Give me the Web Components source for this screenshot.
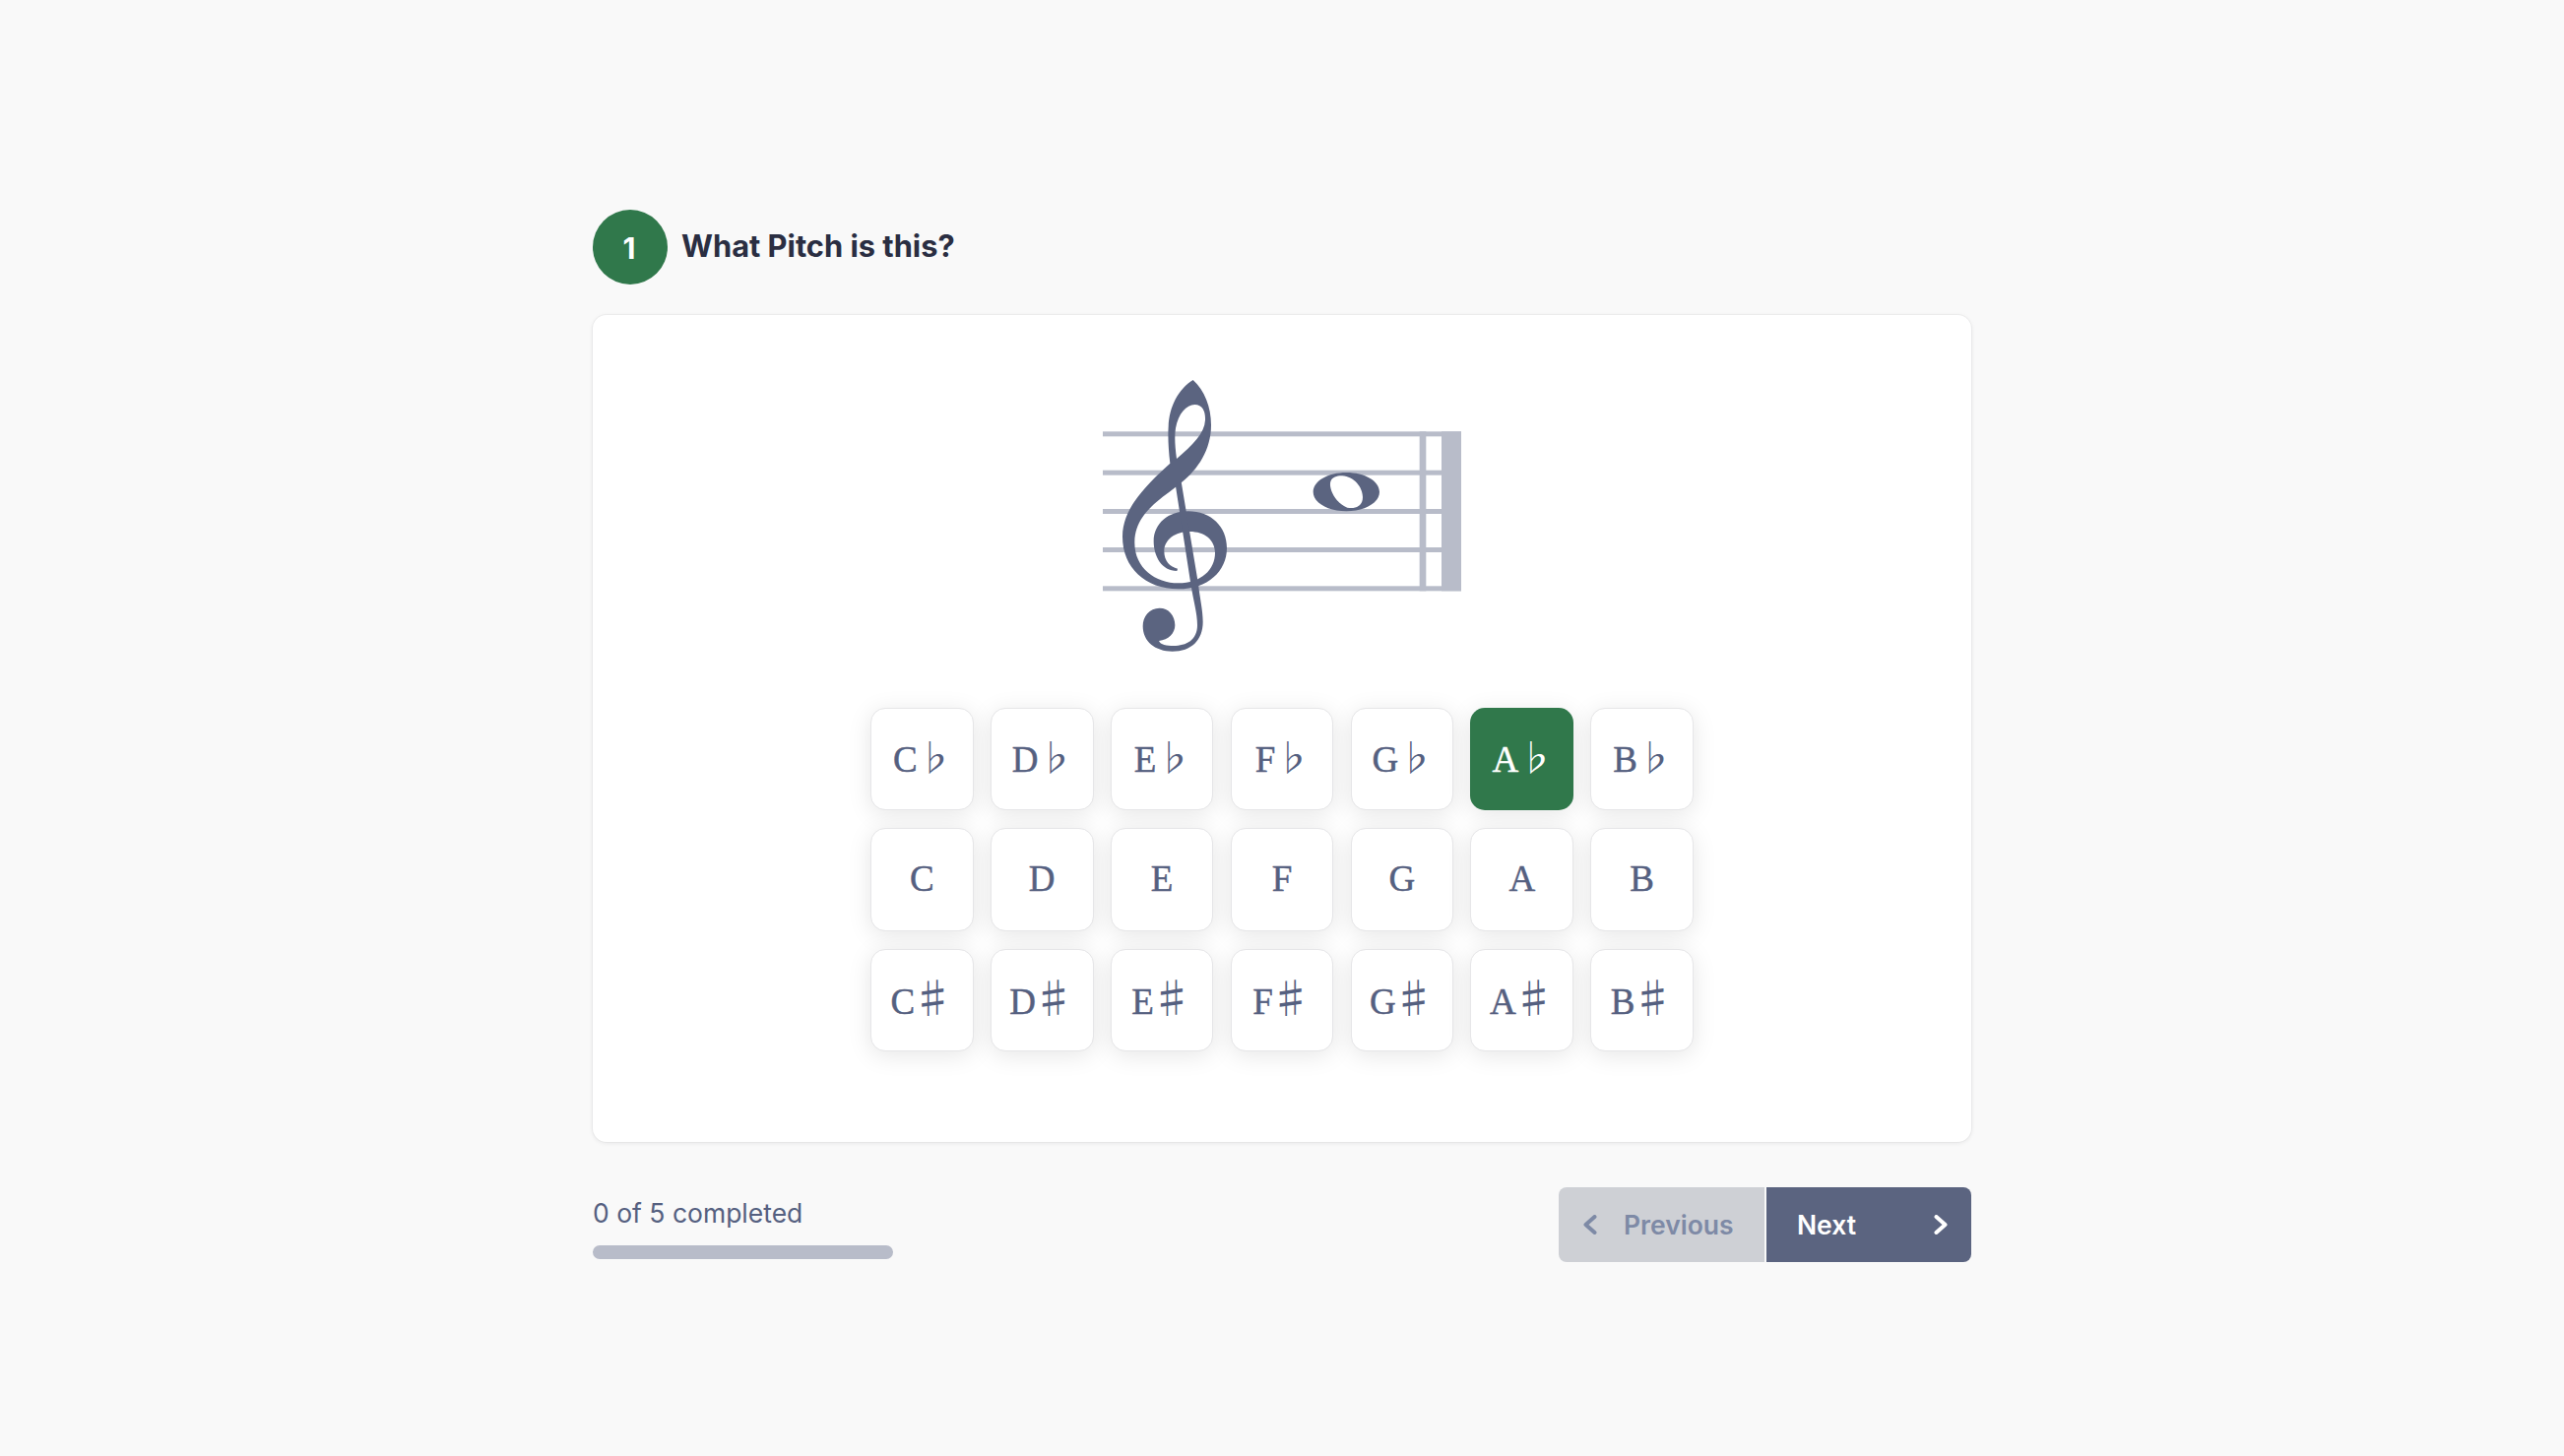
<!DOCTYPE html>
<html lang="en"><head><meta charset="utf-8"><title>What Pitch is this?</title>
<style>
html,body{margin:0;padding:0;background:#f9f9f9;}
body{font-family:Inter,"Liberation Sans",sans-serif;}
</style></head>
<body>
<quiz-page>
  <step-heading number="1">What Pitch is this?</step-heading>
  <question-card>
    <staff-figure></staff-figure>
    <note-grid selected="Ab"></note-grid>
  </question-card>
  <quiz-footer>
    <quiz-progress slot="left">0 of 5 completed</quiz-progress>
    <nav-button slot="right" kind="prev">Previous</nav-button>
    <nav-button slot="right" kind="next">Next</nav-button>
  </quiz-footer>
</quiz-page>
<script>
function def(name, css, html){
  customElements.define(name, class extends HTMLElement{
    constructor(){super();this.attachShadow({mode:'open'});}
    connectedCallback(){
      this.shadowRoot.innerHTML='<style>'+css+'</style>'+(typeof html==='function'?html(this):html);
    }
  });
}
def('quiz-page',
 ':host{display:block;width:1400px;margin:0 auto;padding-top:213px;box-sizing:content-box;}',
 '<slot></slot>');
def('step-heading',
 `:host{display:flex;align-items:center;gap:14px;height:76px;margin-bottom:31px;color:#2a2e42;font:700 30.8px/1 Inter,sans-serif;}
  .n{flex:none;width:76px;height:76px;border-radius:50%;background:#30784b;color:#fff;display:flex;align-items:center;justify-content:center;font:700 30px/1 Inter,sans-serif;padding-top:2px;padding-right:2px;box-sizing:border-box;}
  .t{position:relative;top:-1px;}`,
 h=>`<span class="n">${h.getAttribute('number')}</span><span class="t"><slot></slot></span>`);
def('question-card',
 `:host{display:flex;flex-direction:column;align-items:center;box-sizing:border-box;height:840px;padding-top:66px;background:#fff;border-radius:14px;box-shadow:0 0 0 1px rgba(20,20,40,.03),0 1px 5px rgba(20,20,40,.085);}`,
 '<slot></slot>');
def('staff-figure',
 `:host{display:block;width:364px;height:276px;margin-bottom:57px;flex:none;}
  svg{display:block;width:100%;height:100%;}`,
 `<svg viewBox="120 78 1092 828" aria-label="Treble clef with a whole note">
   <g fill="#b8bcc9">
     <rect x="120" y="235" width="1092" height="15"/><rect x="120" y="353" width="1092" height="15"/>
     <rect x="120" y="471" width="1092" height="15"/><rect x="120" y="588" width="1092" height="15"/>
     <rect x="120" y="706" width="1092" height="15"/>
     <rect x="1085" y="235" width="20" height="486"/><rect x="1152" y="235" width="60" height="486"/>
   </g>
   <g fill="#5b6480">
     <path fill-rule="evenodd" d="M395 78C430 110 450 160 450 215C450 290 410 350 360 390C300 440 220 480 217 570C215 650 280 697 350 697C420 697 462 655 462 605C462 565 430 540 385 540C340 540 307 565 307 600C307 630 325 648 348 653L346 660C300 660 275 615 275 570C275 515 320 478 380 478C450 478 498 525 498 590C498 660 440 715 350 715C250 715 180 650 180 555C180 470 250 400 325 332C320 290 318 250 320 220C322 160 350 105 395 78ZM345 318C340 280 338 250 342 225C350 180 375 153 400 153C425 153 433 175 432 200C430 240 395 275 345 318Z"/>
     <path d="M341 395L388 700C396 750 408 790 408 825C408 870 375 888 335 888C315 888 295 885 291 873C320 870 340 850 340 825C340 795 320 773 293 773C262 773 242 798 242 828C242 875 280 905 332 905C390 905 425 870 425 815C425 780 416 745 411 700L359 388Z"/>
     <path fill-rule="evenodd" d="M761 419C761 386 806 360 862 360C918 360 963 386 963 419C963 452 918 478 862 478C806 478 761 452 761 419ZM815 385C805 405 830 455 865 467C890 472 912 462 912 435C912 405 885 372 850 370C835 369 820 374 815 385Z"/>
   </g>
 </svg>`);
const LETTERS=['C','D','E','F','G','A','B'];
def('note-grid',
 `:host{display:grid;grid-template-columns:repeat(7,104.6px);grid-auto-rows:104.4px;column-gap:17.3px;row-gap:18px;}`,
 h=>{const sel=h.getAttribute('selected');let s='';
   [['b','\u266D'],['',''],['s','\u266F']].forEach(([k,acc])=>{
     LETTERS.forEach(L=>{
       const on=(L+k)===sel;
       s+=`<note-key${on?' selected':''} kind="${k}" accidental="${acc}">${L}</note-key>`;
     });
   });
   return s;});
def('note-key',
 `:host{display:flex;align-items:center;justify-content:center;box-sizing:border-box;padding-bottom:2px;background:#fff;border:1.8px solid #e6e6e8;border-radius:15px;box-shadow:0 4px 24px rgba(0,0,0,.1);color:#556080;font:400 37px/1 "Liberation Serif",serif;-webkit-text-stroke:.45px currentColor;background-clip:padding-box;}
  :host([selected]){background:#30784b;border-color:transparent;color:#fff;}
  :host([kind=s]){padding-bottom:5px;}
  .w{display:flex;align-items:baseline;}
  .a{font-family:"Noto Sans CJK JP",serif;font-size:37px;-webkit-text-stroke:0;}
  :host([kind=b]) .w{margin-left:2px;}
  :host([kind=b]) .a{margin-left:-1px;}
  :host([kind=s]) .a{font-size:42px;margin-left:-3px;}`,
 h=>`<span class="w"><slot></slot><span class="a">${h.getAttribute('accidental')||''}</span></span>`);
def('quiz-footer',
 `:host{display:flex;justify-content:space-between;margin-top:46px;}
  .r{display:flex;gap:2px;}`,
 '<slot name="left"></slot><div class="r"><slot name="right"></slot></div>');
def('quiz-progress',
 `:host{display:block;width:305px;color:#556080;font:400 26.5px/32px Inter,sans-serif;padding-top:10px;white-space:nowrap;}
  .bar{height:14px;border-radius:7px;background:#b8bcc9;margin-top:17px;}`,
 '<slot></slot><div class="bar"></div>');
def('nav-button',
 `:host{display:flex;align-items:center;box-sizing:border-box;height:76px;font:600 26.5px/1 Inter,sans-serif;}
  :host([kind=prev]){width:209px;padding-left:25px;gap:27px;background:#ced0d5;color:#7e8aa6;border-radius:8px 0 0 8px;}
  :host([kind=next]){width:208px;padding:0 24px 0 31px;justify-content:space-between;background:#5b6480;color:#fff;border-radius:0 8px 8px 0;}
  svg{display:block;flex:none;}`,
 h=>h.getAttribute('kind')==='prev'
  ?`<svg width="14" height="20" viewBox="0 0 14 20"><path d="M11.5 2L2.5 10l9 8" fill="none" stroke="currentColor" stroke-width="4" stroke-linecap="round" stroke-linejoin="round"/></svg><slot></slot>`
  :`<slot></slot><svg width="14" height="20" viewBox="0 0 14 20"><path d="M2.5 2l9 8-9 8" fill="none" stroke="currentColor" stroke-width="4" stroke-linecap="round" stroke-linejoin="round"/></svg>`);
</script>
</body></html>
